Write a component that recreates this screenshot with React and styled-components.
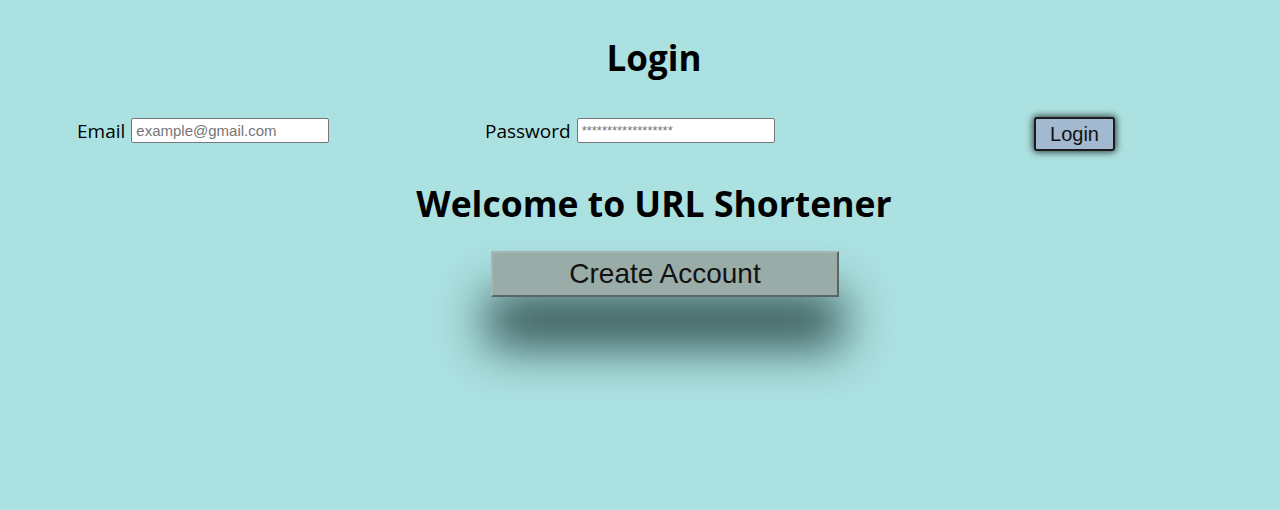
import React from "react";
import styled, { createGlobalStyle } from "styled-components";

const Global = createGlobalStyle`
  html, body {
    margin: 0;
    padding: 0;
    background: #ace1e1;
  }
  body {
    font-family: "Open Sans", "Noto Sans", sans-serif;
    color: #000;
  }
`;

const Page = styled.div`
  min-height: 510px;
  padding: 0 8px 0 36px;
  box-sizing: border-box;
  display: flex;
  flex-direction: column;
  align-items: center;
`;

const Title = styled.h1`
  margin: ${(p) => p.$margin};
  font-size: ${(p) => p.$size};
  font-weight: 700;
  line-height: 1.2;
`;

const Row = styled.div`
  align-self: stretch;
  display: grid;
  grid-template-columns: 408px 549px 1fr;
  align-items: center;
  margin-left: 41px;
  margin-right: -28px;
`;

const Field = styled.label`
  display: flex;
  align-items: center;
  gap: 6px;
  font-size: 19px;
`;

const Input = styled.input`
  width: 198px;
  height: 25px;
  box-sizing: border-box;
  border: 1px solid #767676;
  border-radius: 2px;
  background: #fff;
  padding: 1px 4px;
  font-family: "Liberation Sans", Arial, sans-serif;
  font-size: ${(p) => p.$fs || "15px"};
  &::placeholder {
    color: #767676;
  }
`;

const LoginButton = styled.button`
  justify-self: start;
  margin-top: 7px;
  width: 81px;
  height: 34px;
  box-sizing: border-box;
  background: #a2b9cf;
  border: 2px solid #1c1c1c;
  border-radius: 3px;
  box-shadow: 0 0 7px 1px rgba(0, 0, 0, 0.75);
  font-family: "Liberation Sans", Arial, sans-serif;
  font-size: 20px;
  color: #111;
  padding: 0;
`;

const CreateButton = styled.button`
  margin-left: 22px;
  width: 348px;
  height: 46px;
  box-sizing: border-box;
  background: #9aaca8;
  border: 2px solid;
  border-color: #a6b7b3 #5a6663 #5a6663 #a6b7b3;
  box-shadow: 0 46px 48px 4px rgba(20, 45, 45, 0.8);
  font-family: "Liberation Sans", Arial, sans-serif;
  font-size: 28px;
  color: #111;
  padding: 0;
`;

export default function App() {
  return (
    <>
      <Global />
      <Page>
        <Title $size="35px" $margin="37px 0 31px">Login</Title>
        <Row>
          <Field>
            Email
            <Input type="email" placeholder="example@gmail.com" />
          </Field>
          <Field>
            Password
            <Input type="password" placeholder="******************" $fs="13px" />
          </Field>
          <LoginButton>Login</LoginButton>
        </Row>
        <Title $size="35.5px" $margin="31px 0 26px">
          Welcome to URL Shortener
        </Title>
        <CreateButton>Create Account</CreateButton>
      </Page>
    </>
  );
}
